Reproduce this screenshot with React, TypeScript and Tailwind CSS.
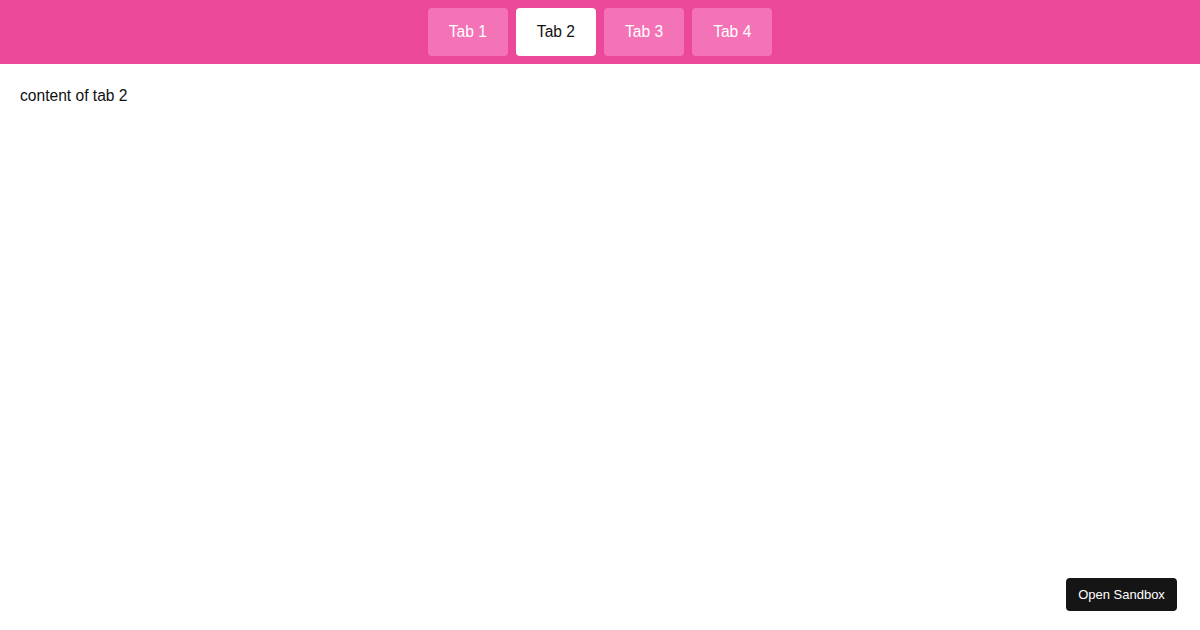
const tabs = ["Tab 1", "Tab 2", "Tab 3", "Tab 4"];

export default function App() {
  const active = 1;
  return (
    <div className="min-h-[630px] bg-white font-['Liberation_Sans',Arial,sans-serif]">
      <div className="flex h-16 items-center justify-center gap-2 bg-[#ec4899]">
        {tabs.map((tab, i) => (
          <button
            key={tab}
            className={
              i === active
                ? "h-12 rounded px-[21px] text-[15.6px] bg-white text-[#111]"
                : "h-12 rounded px-[21px] text-[15.6px] bg-[#f472b6] text-white"
            }
          >
            {tab}
          </button>
        ))}
      </div>
      <div className="px-5 pt-[21px] text-[15.6px] leading-[22px] text-[#111]">content of tab {active + 1}</div>
      <button className="fixed bottom-[19px] right-[23px] h-[33px] w-[111px] rounded bg-[#151515] text-[13px] text-white">
        Open Sandbox
      </button>
    </div>
  );
}
